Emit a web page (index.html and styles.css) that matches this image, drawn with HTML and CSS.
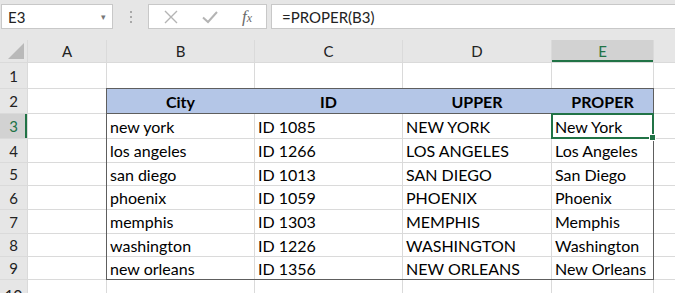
FILE: index.html
```html
<!DOCTYPE html>
<html>
<head>
<meta charset="utf-8">
<link rel="stylesheet" href="styles.css">
</head>
<body>
<div class="toolbar">
  <div class="namebox"><span>E3</span><span class="caret">&#9662;</span></div>
  <div class="sep"><i></i><i></i><i></i></div>
  <div class="fxbox">
    <svg class="ico" width="16" height="16" viewBox="0 0 16 16"><path d="M2 2 L14 14 M14 2 L2 14" stroke="#b4b4b4" stroke-width="1.4" fill="none"/></svg>
    <svg class="ico" width="18" height="16" viewBox="0 0 18 16"><path d="M2 8.5 L7 13 L16 3" stroke="#b4b4b4" stroke-width="2" fill="none"/></svg>
    <span class="fx">f<span class="x">x</span></span>
  </div>
  <div class="formula">=PROPER(B3)</div>
</div>
<div class="sheet">
  <div class="corner"><span class="tri"></span></div>
  <div class="ch">A</div><div class="ch">B</div><div class="ch">C</div><div class="ch">D</div><div class="ch sel">E</div><div class="ch blank"></div>

  <div class="rh">1</div><div class="c"></div><div class="c"></div><div class="c"></div><div class="c"></div><div class="c"></div><div class="c"></div>

  <div class="rh">2</div><div class="c"></div><div class="c th">City</div><div class="c th">ID</div><div class="c th">UPPER</div><div class="c th last">PROPER</div><div class="c"></div>

  <div class="rh sel">3</div><div class="c"></div><div class="c">new york</div><div class="c">ID 1085</div><div class="c">NEW YORK</div><div class="c">New York</div><div class="c"></div>
  <div class="rh">4</div><div class="c"></div><div class="c">los angeles</div><div class="c">ID 1266</div><div class="c">LOS ANGELES</div><div class="c">Los Angeles</div><div class="c"></div>
  <div class="rh">5</div><div class="c"></div><div class="c">san diego</div><div class="c">ID 1013</div><div class="c">SAN DIEGO</div><div class="c">San Diego</div><div class="c"></div>
  <div class="rh">6</div><div class="c"></div><div class="c">phoenix</div><div class="c">ID 1059</div><div class="c">PHOENIX</div><div class="c">Phoenix</div><div class="c"></div>
  <div class="rh">7</div><div class="c"></div><div class="c">memphis</div><div class="c">ID 1303</div><div class="c">MEMPHIS</div><div class="c">Memphis</div><div class="c"></div>
  <div class="rh">8</div><div class="c"></div><div class="c">washington</div><div class="c">ID 1226</div><div class="c">WASHINGTON</div><div class="c">Washington</div><div class="c"></div>
  <div class="rh">9</div><div class="c"></div><div class="c">new orleans</div><div class="c">ID 1356</div><div class="c">NEW ORLEANS</div><div class="c">New Orleans</div><div class="c"></div>
  <div class="rh">10</div><div class="c"></div><div class="c"></div><div class="c"></div><div class="c"></div><div class="c"></div><div class="c"></div>

  <div class="tableframe"></div>
  <div class="headline"></div>
  <div class="selbox"><span class="handle"></span></div>
</div>
</body>
</html>
```
FILE: styles.css
```css
html, body {
  margin: 0;
  padding: 0;
  background: #ffffff;
  overflow: hidden;
}
body {
  width: 675px;
  height: 293px;
  font-family: Lato, "Liberation Sans", sans-serif;
  color: #000;
}
.toolbar {
  height: 40px;
  background: #e6e6e6;
  display: flex;
  align-items: flex-start;
  padding-top: 4px;
  box-sizing: border-box;
}
.namebox {
  margin-left: 1px;
  width: 112px;
  height: 25px;
  box-sizing: border-box;
  background: #fff;
  border: 1px solid #c8c8c8;
  display: flex;
  align-items: center;
  justify-content: space-between;
  padding: 0 6px 0 6px;
  font-size: 15px;
  color: #222;
}
.caret {
  font-size: 9px;
  color: #777;
}
.sep {
  width: 35px;
  height: 25px;
  display: flex;
  flex-direction: column;
  align-items: center;
  justify-content: center;
  gap: 3px;
}
.sep i {
  width: 2px;
  height: 2px;
  background: #a8a8a8;
  display: block;
}
.fxbox {
  width: 119px;
  height: 25px;
  box-sizing: border-box;
  background: #fff;
  border: 1px solid #c8c8c8;
  display: flex;
  align-items: center;
  padding-left: 14px;
  gap: 22px;
}
.fx {
  font-family: "Liberation Serif", serif;
  font-style: italic;
  font-size: 17px;
  color: #6a6a6a;
  margin-left: 1px;
}
.fx .x {
  font-size: 12px;
}
.formula {
  margin-left: 4px;
  flex: 1;
  height: 25px;
  box-sizing: border-box;
  background: #fff;
  border: 1px solid #c8c8c8;
  border-right: none;
  display: flex;
  align-items: center;
  padding-left: 10px;
  font-size: 15px;
  color: #222;
}
.sheet {
  position: relative;
  display: grid;
  grid-template-columns: 27px 78px 147px 147px 148px 101px 1fr;
  grid-template-rows: 22px 25px 24px 24px 23px 22px 23px 23px 22px 22px 30px;
  gap: 1px;
  background: #dadada;
}
.corner {
  background: #e6e6e6;
  position: relative;
}
.tri {
  position: absolute;
  right: 3px;
  bottom: 3px;
  width: 0;
  height: 0;
  border-left: 16px solid transparent;
  border-bottom: 16px solid #b9b9b9;
}
.ch {
  background: #e6e6e6;
  display: flex;
  align-items: center;
  justify-content: center;
  font-size: 15px;
  color: #222;
}
.ch.sel {
  background: #d2d2d2;
  color: #217346;
  box-shadow: inset 0 -2px 0 #217346;
}
.rh {
  background: #e6e6e6;
  display: flex;
  align-items: center;
  justify-content: center;
  font-size: 15px;
  color: #222;
}
.rh.sel {
  background: #d2d2d2;
  color: #217346;
  box-shadow: inset -2px 0 0 #217346;
}
.c {
  background: #fff;
  display: flex;
  align-items: center;
  padding-left: 3px;
  font-size: 16px;
  white-space: nowrap;
  overflow: visible;
}
.c.th {
  background: #b4c6e7;
  font-weight: bold;
  justify-content: center;
  padding-left: 0;
  box-shadow: 1px 0 0 #b4c6e7;
}
.c.th.last {
  box-shadow: none;
}
.tableframe {
  position: absolute;
  grid-row: 3 / 11;
  grid-column: 3 / 7;
  inset: -1px;
  border: 1px solid #5e5e5e;
  pointer-events: none;
}
.headline {
  position: absolute;
  grid-row: 3 / 4;
  grid-column: 3 / 7;
  left: -1px;
  right: -1px;
  bottom: -1px;
  height: 1px;
  background: #5e5e5e;
  pointer-events: none;
}
.selbox {
  position: absolute;
  grid-row: 4 / 5;
  grid-column: 6 / 7;
  inset: -1px;
  border: 2px solid #217346;
  pointer-events: none;
}
.handle {
  position: absolute;
  right: -4px;
  bottom: -4px;
  width: 5px;
  height: 5px;
  background: #217346;
  border: 1px solid #fff;
}
```
